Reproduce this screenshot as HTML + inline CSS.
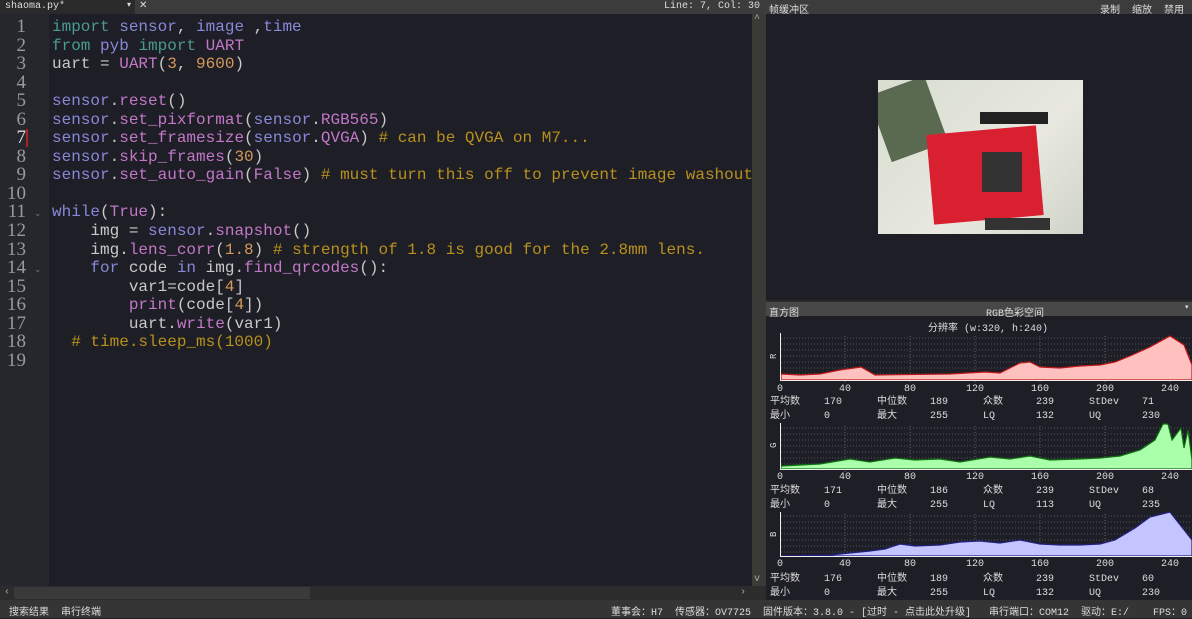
<!DOCTYPE html>
<html><head><meta charset="utf-8"><style>
*{margin:0;padding:0;box-sizing:border-box}
body{width:1192px;height:618px;background:#1e1f26;overflow:hidden;position:relative;font-family:"Liberation Sans","Noto Sans CJK SC",sans-serif;color:#ddd}
.abs{position:absolute}
.ui{font-family:"Liberation Mono","Noto Sans CJK SC",monospace;font-size:10px;color:#ddd;white-space:pre}
.code{position:absolute;left:52px;top:18px;font-family:"Liberation Mono",monospace;font-size:16px;line-height:18.55px;color:#c8c8c8;white-space:pre}
.ln{position:absolute;left:0;top:18px;width:26px;text-align:right;font-family:"Liberation Serif",serif;font-size:19px;line-height:18.55px;color:#9a9a9a}
.k{color:#4a9a90}.s{color:#8888d8}.f{color:#c277c8}.n{color:#d49a5a}.c{color:#b8901c}
</style></head><body>
<div class="abs" style="left:0;top:0;width:766px;height:14px;background:#3c3c3c"></div>
<div class="abs" style="left:0;top:0;width:135px;height:14px;background:#2a2a2a"></div>
<div class="abs ui" style="left:5px;top:1px">shaoma.py*</div>
<div class="abs ui" style="left:127px;top:0px;font-size:8px">▾</div>
<div class="abs ui" style="left:139px;top:0px">✕</div>
<div class="abs ui" style="left:664px;top:1px">Line: 7, Col: 30</div>
<div class="abs" style="left:0;top:14px;width:49px;height:572px;background:#26272d"></div>
<div class="abs" style="left:26px;top:129px;width:2px;height:18px;background:#b02020"></div>
<div class="ln">1<br>2<br>3<br>4<br>5<br>6<br><span style="color:#ddd">7</span><br>8<br>9<br>10<br>11<br>12<br>13<br>14<br>15<br>16<br>17<br>18<br>19</div>
<div class="abs" style="left:34px;top:208px;font-size:9px;color:#777">⌄</div>
<div class="abs" style="left:34px;top:264px;font-size:9px;color:#777">⌄</div>
<div class="code"><span class="k">import</span> <span class="s">sensor</span>, <span class="s">image</span> ,<span class="s">time</span>
<span class="k">from</span> <span class="s">pyb</span> <span class="k">import</span> <span class="f">UART</span>
uart = <span class="f">UART</span>(<span class="n">3</span>, <span class="n">9600</span>)

<span class="s">sensor</span>.<span class="f">reset</span>()
<span class="s">sensor</span>.<span class="f">set_pixformat</span>(<span class="s">sensor</span>.<span class="f">RGB565</span>)
<span class="s">sensor</span>.<span class="f">set_framesize</span>(<span class="s">sensor</span>.<span class="f">QVGA</span>) <span class="c"># can be QVGA on M7...</span>
<span class="s">sensor</span>.<span class="f">skip_frames</span>(<span class="n">30</span>)
<span class="s">sensor</span>.<span class="f">set_auto_gain</span>(<span class="f">False</span>) <span class="c"># must turn this off to prevent image washout</span>

<span class="s">while</span>(<span class="f">True</span>):
    img = <span class="s">sensor</span>.<span class="f">snapshot</span>()
    img.<span class="f">lens_corr</span>(<span class="n">1.8</span>) <span class="c"># strength of 1.8 is good for the 2.8mm lens.</span>
    <span class="s">for</span> code <span class="s">in</span> img.<span class="f">find_qrcodes</span>():
        var1=code[<span class="n">4</span>]
        <span class="f">print</span>(code[<span class="n">4</span>])
        uart.<span class="f">write</span>(var1)
  <span class="c"># time.sleep_ms(1000)</span>
</div>
<div class="abs" style="left:752px;top:14px;width:14px;height:572px;background:#3a3a36"></div>
<div class="abs ui" style="left:754px;top:14px;color:#aaa">^</div>
<div class="abs ui" style="left:754px;top:574px;color:#aaa">v</div>
<div class="abs" style="left:0;top:586px;width:766px;height:14px;background:#2c2c2c"></div>
<div class="abs" style="left:14px;top:587px;width:296px;height:12px;background:#3a3a3a"></div>
<div class="abs ui" style="left:4px;top:587px;color:#aaa">‹</div>
<div class="abs ui" style="left:740px;top:587px;color:#aaa">›</div>
<div class="abs" style="left:0;top:600px;width:1192px;height:18px;background:#353535"></div>
<div class="abs ui" style="left:9px;top:603px">搜索结果  串行终端</div>
<div class="abs ui" style="left:611px;top:603px">董事会：H7  传感器：OV7725  固件版本：3.8.0 - [过时 - 点击此处升级]   串行端口：COM12  驱动：E:/    FPS：0</div>
<!-- right -->
<div class="abs" style="left:766px;top:0;width:426px;height:14px;background:#3c3c3c"></div>
<div class="abs ui" style="left:769px;top:1px">帧缓冲区</div>
<div class="abs ui" style="left:1100px;top:1px">录制  缩放  禁用</div>
<div class="abs" style="left:878px;top:80px;width:205px;height:154px;overflow:hidden;background:linear-gradient(135deg,#d8ddd0,#e8e8e0 60%,#d0d4c8)">
<div class="abs" style="left:0;top:4px;width:60px;height:70px;background:#5a6a50;transform:rotate(-20deg)"></div>
<div class="abs" style="left:52px;top:50px;width:110px;height:90px;background:#d82030;transform:rotate(-5deg)"></div>
<div class="abs" style="left:102px;top:32px;width:68px;height:12px;background:#222"></div>
<div class="abs" style="left:104px;top:72px;width:40px;height:40px;background:#333"></div>
<div class="abs" style="left:107px;top:138px;width:65px;height:12px;background:#333"></div>
</div>
<div class="abs" style="left:766px;top:300px;width:426px;height:2px;background:#2a2a2a"></div>
<div class="abs" style="left:766px;top:302px;width:426px;height:14px;background:#484848"></div>
<div class="abs ui" style="left:769px;top:304px">直方图</div>
<div class="abs ui" style="left:986px;top:304px">RGB色彩空间</div>
<div class="abs ui" style="left:1185px;top:303px;font-size:7px">▾</div>
<div class="abs ui" style="left:928px;top:319px">分辨率 (w:320, h:240)</div>
<svg class="abs" style="left:0;top:0" width="1192" height="618">
<defs>
<g id="grid" stroke="#888" stroke-dasharray="1,2" stroke-width="0.6">
<line x1="781" x2="1192" y1="0" y2="0"/><line x1="781" x2="1192" y1="6" y2="6"/><line x1="781" x2="1192" y1="12" y2="12"/><line x1="781" x2="1192" y1="18" y2="18"/><line x1="781" x2="1192" y1="24" y2="24"/><line x1="781" x2="1192" y1="30" y2="30"/><line x1="781" x2="1192" y1="36" y2="36"/>
<line x1="845" x2="845" y1="-2" y2="45"/><line x1="910" x2="910" y1="-2" y2="45"/><line x1="975" x2="975" y1="-2" y2="45"/><line x1="1040" x2="1040" y1="-2" y2="45"/><line x1="1105" x2="1105" y1="-2" y2="45"/><line x1="1170" x2="1170" y1="-2" y2="45"/>
</g></defs>
<use href="#grid" y="338"/>
<polygon fill="#ffc0c0" stroke="#c01818" stroke-width="1.2" points="781,380 781,374 800,375 820,374 840,370 861,367 875,375 950,374 985,372 1000,373 1010,368 1020,363 1030,362 1040,367 1060,368 1080,366 1100,365 1115,362 1130,356 1150,347 1170,336 1184,345 1192,365 1192,380"/>
<use href="#grid" y="428"/>
<polygon fill="#aaffaa" stroke="#107010" stroke-width="1.2" points="781,469 781,466 820,464 850,459 870,462 895,458 915,460 940,459 960,462 990,457 1010,459 1030,456 1050,460 1080,459 1100,458 1120,456 1140,450 1155,440 1163,424 1168,424 1172,440 1178,432 1181,428 1184,448 1188,430 1192,460 1192,469"/>
<use href="#grid" y="516"/>
<polygon fill="#c4c4ff" stroke="#202080" stroke-width="1.2" points="781,556 830,555 870,551 885,549 900,544 915,546 940,545 960,542 980,541 1000,543 1020,540 1040,544 1060,545 1080,545 1100,544 1115,540 1135,528 1150,517 1170,512 1192,540 1192,556"/>
<g stroke="#eee" stroke-width="1"><line x1="780.5" x2="780.5" y1="333" y2="381"/><line x1="780" x2="1192" y1="380.5" y2="380.5"/><line x1="780.5" x2="780.5" y1="423" y2="470"/><line x1="780" x2="1192" y1="469.5" y2="469.5"/><line x1="780.5" x2="780.5" y1="512" y2="557"/><line x1="780" x2="1192" y1="556.5" y2="556.5"/></g>
<g fill="#ddd" font-family="Liberation Mono" font-size="9"><text transform="translate(776,359) rotate(-90)">R</text><text transform="translate(776,448) rotate(-90)">G</text><text transform="translate(776,537) rotate(-90)">B</text></g>
<g fill="#ddd" font-family="Liberation Mono" font-size="10" text-anchor="middle">
<text x="780" y="391">0</text><text x="845" y="391">40</text><text x="910" y="391">80</text><text x="975" y="391">120</text><text x="1040" y="391">160</text><text x="1105" y="391">200</text><text x="1170" y="391">240</text>
<text x="780" y="479">0</text><text x="845" y="479">40</text><text x="910" y="479">80</text><text x="975" y="479">120</text><text x="1040" y="479">160</text><text x="1105" y="479">200</text><text x="1170" y="479">240</text>
<text x="780" y="566">0</text><text x="845" y="566">40</text><text x="910" y="566">80</text><text x="975" y="566">120</text><text x="1040" y="566">160</text><text x="1105" y="566">200</text><text x="1170" y="566">240</text>
</g>
<g fill="#ddd" font-family="Liberation Mono,Noto Sans CJK SC" font-size="10">
<text x="770" y="404">平均数</text><text x="824" y="404">170</text><text x="877" y="404">中位数</text><text x="930" y="404">189</text><text x="983" y="404">众数</text><text x="1036" y="404">239</text><text x="1089" y="404">StDev</text><text x="1142" y="404">71</text>
<text x="770" y="418">最小</text><text x="824" y="418">0</text><text x="877" y="418">最大</text><text x="930" y="418">255</text><text x="983" y="418">LQ</text><text x="1036" y="418">132</text><text x="1089" y="418">UQ</text><text x="1142" y="418">230</text>
<text x="770" y="493">平均数</text><text x="824" y="493">171</text><text x="877" y="493">中位数</text><text x="930" y="493">186</text><text x="983" y="493">众数</text><text x="1036" y="493">239</text><text x="1089" y="493">StDev</text><text x="1142" y="493">68</text>
<text x="770" y="507">最小</text><text x="824" y="507">0</text><text x="877" y="507">最大</text><text x="930" y="507">255</text><text x="983" y="507">LQ</text><text x="1036" y="507">113</text><text x="1089" y="507">UQ</text><text x="1142" y="507">235</text>
<text x="770" y="581">平均数</text><text x="824" y="581">176</text><text x="877" y="581">中位数</text><text x="930" y="581">189</text><text x="983" y="581">众数</text><text x="1036" y="581">239</text><text x="1089" y="581">StDev</text><text x="1142" y="581">60</text>
<text x="770" y="595">最小</text><text x="824" y="595">0</text><text x="877" y="595">最大</text><text x="930" y="595">255</text><text x="983" y="595">LQ</text><text x="1036" y="595">132</text><text x="1089" y="595">UQ</text><text x="1142" y="595">230</text>
</g>
</svg>
</body></html>
